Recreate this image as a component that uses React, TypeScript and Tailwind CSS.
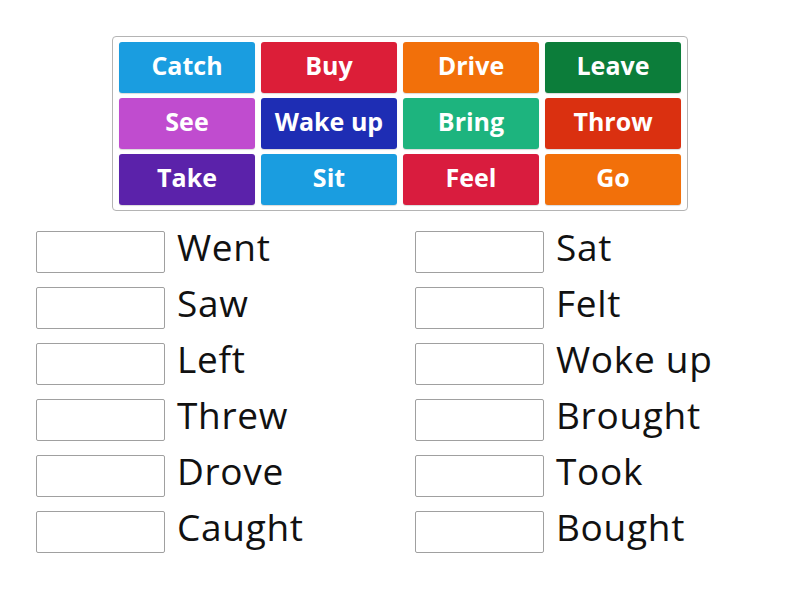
const tiles = [
  { label: "Catch", color: "bg-[#1a9de0]" },
  { label: "Buy", color: "bg-[#dc1e38]" },
  { label: "Drive", color: "bg-[#f2700a]" },
  { label: "Leave", color: "bg-[#0c7d3a]" },
  { label: "See", color: "bg-[#c04ccf]" },
  { label: "Wake up", color: "bg-[#1e2db4]" },
  { label: "Bring", color: "bg-[#1db47e]" },
  { label: "Throw", color: "bg-[#da3010]" },
  { label: "Take", color: "bg-[#5b22aa]" },
  { label: "Sit", color: "bg-[#1a9de0]" },
  { label: "Feel", color: "bg-[#d91c3e]" },
  { label: "Go", color: "bg-[#f2700a]" },
];

const left = ["Went", "Saw", "Left", "Threw", "Drove", "Caught"];
const right = ["Sat", "Felt", "Woke up", "Brought", "Took", "Bought"];

function AnswerRow({ word }: { word: string }) {
  return (
    <div className="flex items-start gap-[12px] h-[42px]">
      <div className="w-[129px] h-[42px] shrink-0 border border-[#a0a0a0] rounded-[2px] bg-white" />
      <span className="text-[37px] leading-[32px] tracking-[0.7px] text-[#111] whitespace-nowrap">{word}</span>
    </div>
  );
}

export default function App() {
  return (
    <div className="w-[800px] h-[600px] bg-white font-['Open_Sans',sans-serif]">
      <div className="flex justify-center pt-[36px]">
        <div className="grid grid-cols-[repeat(4,136px)] gap-x-[6px] gap-y-[5px] px-[6px] py-[5px] border border-[#b4b4b4] rounded-[4px]">
          {tiles.map((t) => (
            <div
              key={t.label}
              className={`${t.color} h-[51px] rounded-[3px] flex items-center justify-center pb-[3px] text-white font-bold text-[25px] shadow-[0_1px_1px_rgba(0,0,0,0.15)]`}
            >
              {t.label}
            </div>
          ))}
        </div>
      </div>
      <div className="flex pt-[20px] pl-[36px] gap-[250px]">
        <div className="flex flex-col gap-[14px] w-[129px]">
          {left.map((w) => (
            <AnswerRow key={w} word={w} />
          ))}
        </div>
        <div className="flex flex-col gap-[14px]">
          {right.map((w) => (
            <AnswerRow key={w} word={w} />
          ))}
        </div>
      </div>
    </div>
  );
}
